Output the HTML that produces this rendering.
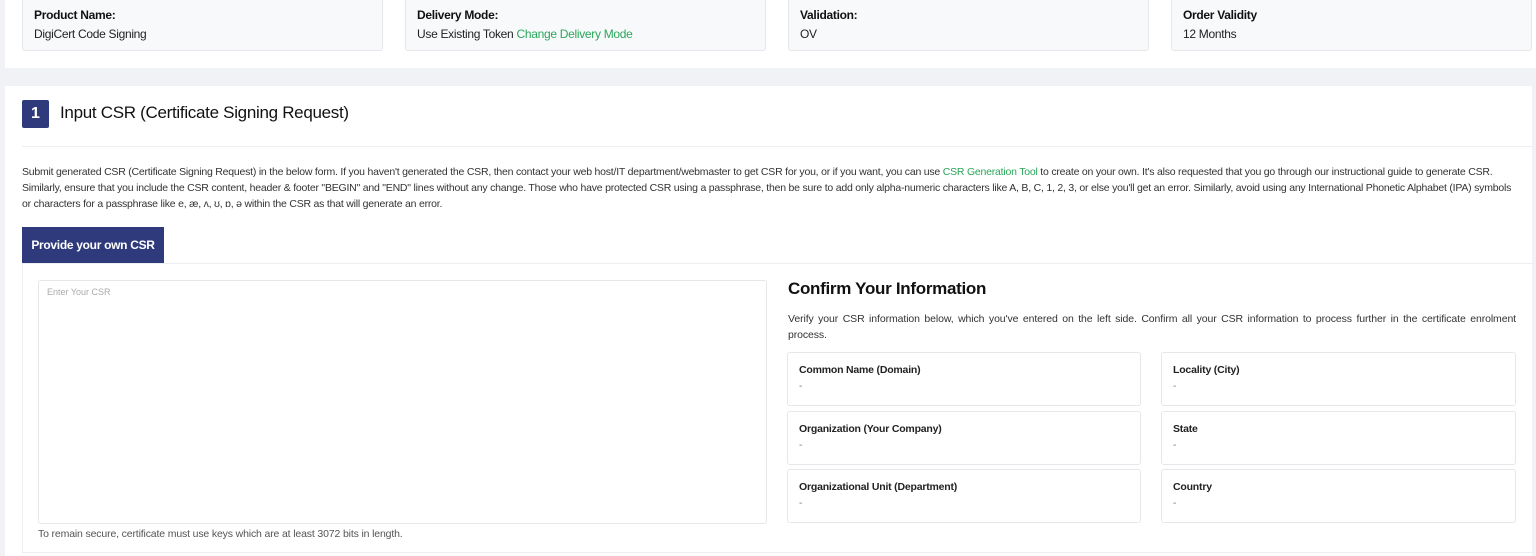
<!DOCTYPE html>
<html><head><meta charset="utf-8"><style>
*{box-sizing:border-box;margin:0;padding:0}
body{width:1536px;height:543px;overflow:hidden;background:#f1f2f5;font-family:"Liberation Sans",Arial,sans-serif;color:#222;position:relative}
.abs{position:absolute}
.top{left:5px;top:0;width:1531px;height:68px;background:#fff}
.card{top:-4px;height:55px;width:361px;background:#f8f9fb;border:1px solid #e6e7ea;border-radius:3px;padding:11px 11px 0}
.card b{display:block;font-size:12px;font-weight:bold;letter-spacing:-0.3px;color:#111}
.card .v{display:block;font-size:12px;margin-top:5px;letter-spacing:-0.3px;color:#222}
.card .v .g{color:#2aa65a}
.g{color:#2aa65a}
.main{left:5px;top:86px;width:1527px;height:470px;background:#fff}
.badge{left:22px;top:100px;width:27px;height:28px;background:#2e3a7c;color:#fff;font-size:16px;font-weight:bold;text-align:center;line-height:28px;border-radius:2px}
.title{left:60px;top:103px;font-size:17px;letter-spacing:-0.3px;color:#111}
.hr{left:22px;top:146px;width:1510px;height:1px;background:#eceef1}
.p{left:22px;top:164px;font-size:10.5px;line-height:16px;color:#333;white-space:nowrap;letter-spacing:-0.22px}
.tab{left:22px;top:227px;width:142px;height:36px;background:#2e3a7c;color:#fff;font-size:12px;font-weight:bold;letter-spacing:-0.3px;line-height:36px;text-align:center}
.box{left:22px;top:263px;width:1512px;height:290px;border:1px solid #eceef1;border-right:none}
.ta{left:38px;top:280px;width:729px;height:244px;border:1px solid #e6e7ea;border-radius:3px;padding:6px 8px;font-size:9px;color:#aaa}
.note{left:38px;top:528px;font-size:10.5px;color:#555;letter-spacing:-0.15px}
.h2{left:788px;top:279px;font-size:17px;font-weight:bold;color:#111;letter-spacing:-0.3px}
.vp{left:788px;top:311px;width:728px;font-size:10.5px;line-height:16px;color:#333;text-align:justify;letter-spacing:-0.1px}
.f{height:54px;border:1px solid #e6e7ea;border-radius:3px;padding:11px 11px 0;background:#fff}
.f b{display:block;font-size:10.5px;font-weight:bold;color:#222;letter-spacing:-0.2px}
.f span{display:block;font-size:10px;color:#777;margin-top:5px}
</style></head><body>
<div class="abs top"></div>
<div class="abs card" style="left:22px"><b>Product Name:</b><span class="v">DigiCert Code Signing</span></div>
<div class="abs card" style="left:405px"><b>Delivery Mode:</b><span class="v">Use Existing Token <span class="g">Change Delivery Mode</span></span></div>
<div class="abs card" style="left:788px"><b>Validation:</b><span class="v">OV</span></div>
<div class="abs card" style="left:1171px"><b>Order Validity</b><span class="v">12 Months</span></div>
<div class="abs main"></div>
<div class="abs badge">1</div>
<div class="abs title">Input CSR (Certificate Signing Request)</div>
<div class="abs hr"></div>
<div class="abs p">Submit generated CSR (Certificate Signing Request) in the below form. If you haven't generated the CSR, then contact your web host/IT department/webmaster to get CSR for you, or if you want, you can use <span class="g">CSR Generation Tool</span> to create on your own. It's also requested that you go through our instructional guide to generate CSR.<br>Similarly, ensure that you include the CSR content, header &amp; footer "BEGIN" and "END" lines without any change. Those who have protected CSR using a passphrase, then be sure to add only alpha-numeric characters like A, B, C, 1, 2, 3, or else you'll get an error. Similarly, avoid using any International Phonetic Alphabet (IPA) symbols<br>or characters for a passphrase like e, æ, ʌ, ʊ, ɒ, ə within the CSR as that will generate an error.</div>
<div class="abs tab">Provide your own CSR</div>
<div class="abs box"></div>
<div class="abs ta">Enter Your CSR</div>
<div class="abs note">To remain secure, certificate must use keys which are at least 3072 bits in length.</div>
<div class="abs h2">Confirm Your Information</div>
<div class="abs vp">Verify your CSR information below, which you've entered on the left side. Confirm all your CSR information to process further in the certificate enrolment process.</div>
<div class="abs f" style="left:787px;top:352px;width:354px"><b>Common Name (Domain)</b><span>-</span></div>
<div class="abs f" style="left:787px;top:411px;width:354px"><b>Organization (Your Company)</b><span>-</span></div>
<div class="abs f" style="left:787px;top:469px;width:354px"><b>Organizational Unit (Department)</b><span>-</span></div>
<div class="abs f" style="left:1161px;top:352px;width:355px"><b>Locality (City)</b><span>-</span></div>
<div class="abs f" style="left:1161px;top:411px;width:355px"><b>State</b><span>-</span></div>
<div class="abs f" style="left:1161px;top:469px;width:355px"><b>Country</b><span>-</span></div>
</body></html>
